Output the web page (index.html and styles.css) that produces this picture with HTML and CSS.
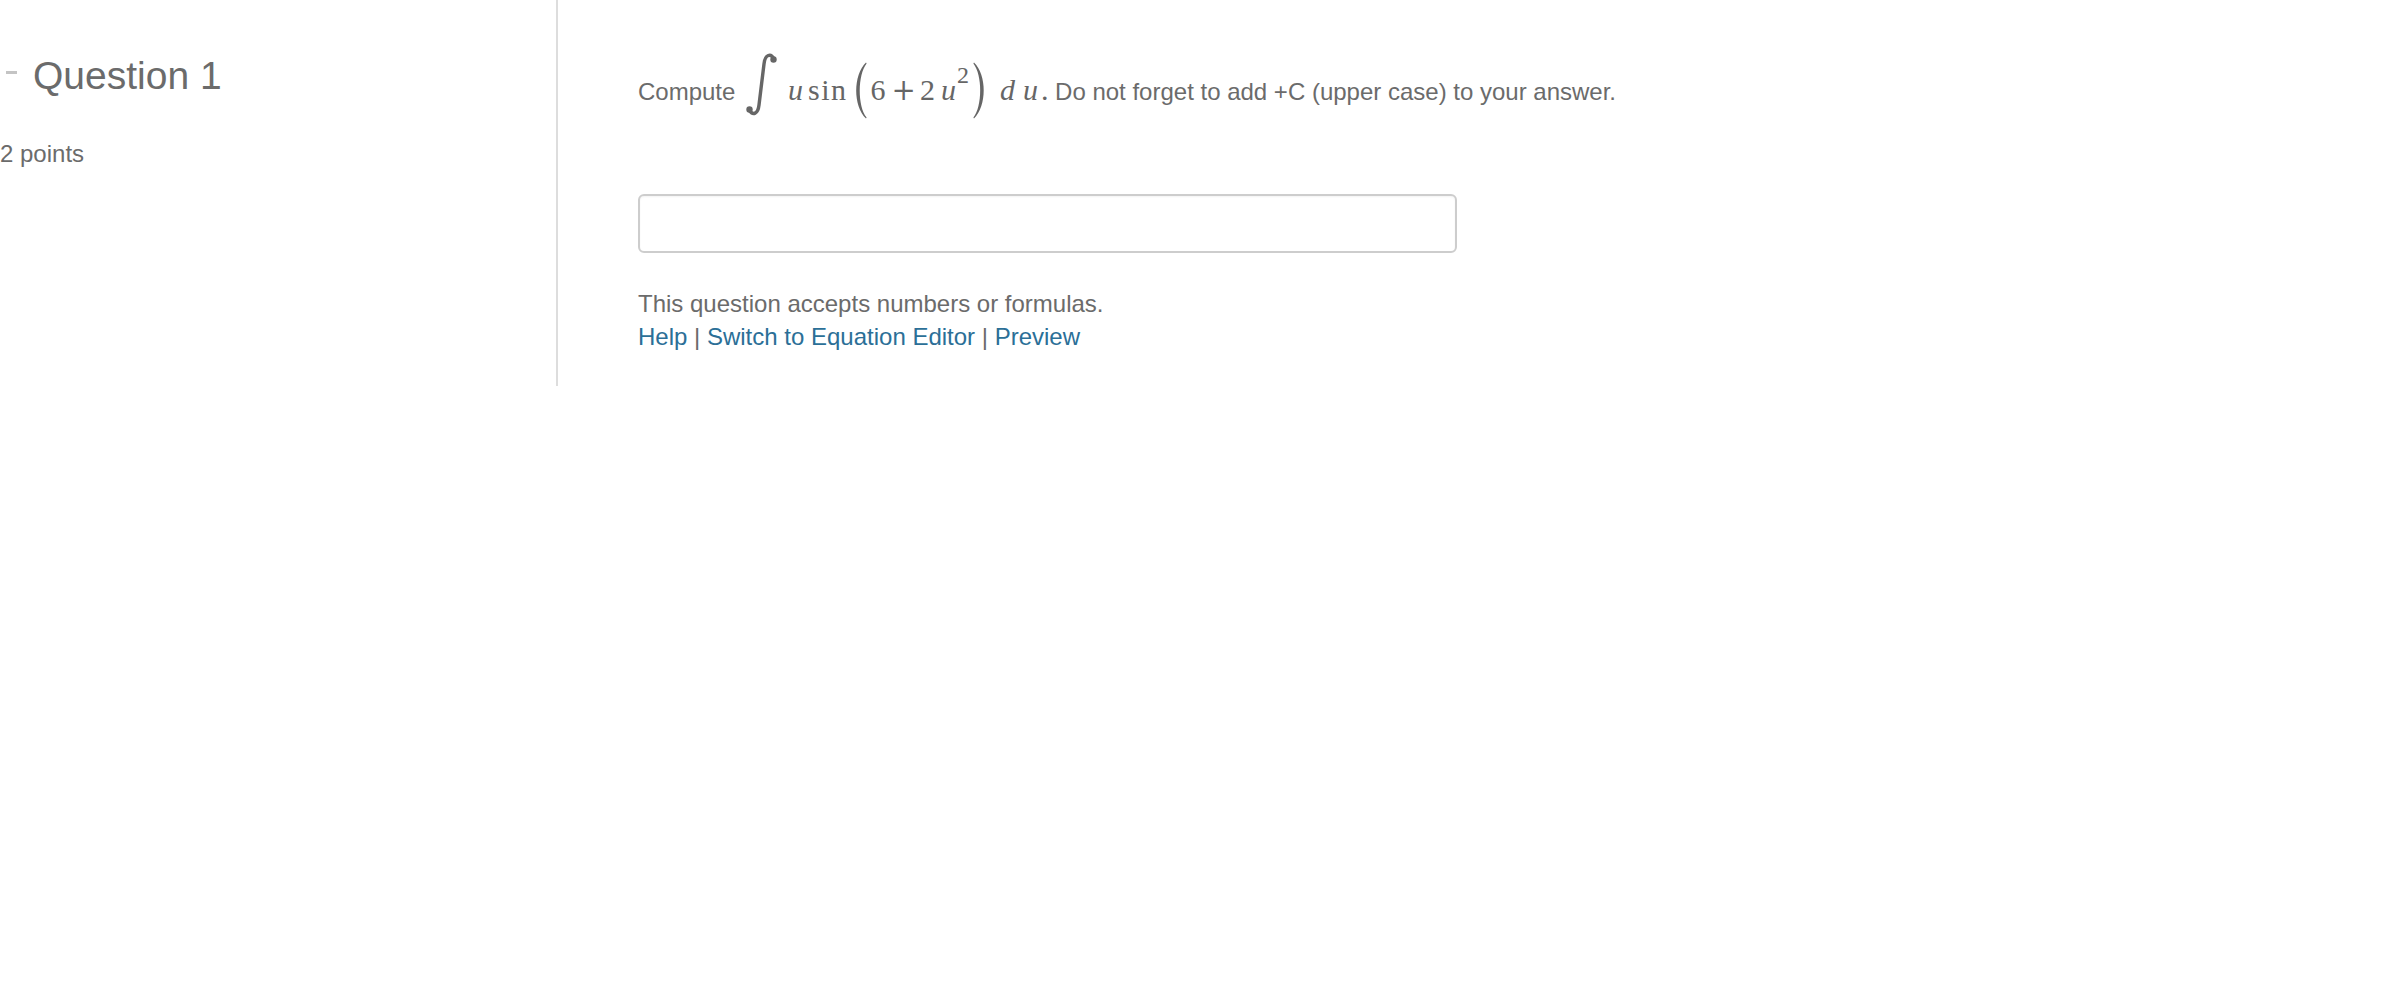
FILE: index.html
```html
<!DOCTYPE html>
<html lang='en'>
<head>
    <meta charset='UTF-8'>
    <title>Question 1</title>
    <link rel="stylesheet" href="styles.css">
</head>
<body>
    <div class='question'>
        <!-- Left header column -->
        <div class='question-side'>
            <h2 class='question-title'><span class='title-dash'></span>Question 1</h2>
            <div class='question-points'>2 points</div>
        </div>

        <!-- Question body -->
        <div class='question-body'>
            <p class='question-text'>Compute
                <svg class='math-int' width='33' height='65' viewBox='0 0 33 65'>
                    <path d='M29 7 C26 1, 20 2, 19 12 L14 53 C13 62, 8 64, 4 58' fill='none' stroke='#666' stroke-width='3.4' stroke-linecap='round'/>
                    <circle cx='28.5' cy='7.5' r='3.2' fill='#666'/>
                    <circle cx='4.5' cy='57.5' r='3.2' fill='#666'/>
                </svg><span class='math'><i class='mi sp-u'>u</i><span class='mo-sin'>sin</span><svg class='math-paren' width='15' height='57' viewBox='0 0 15 57'>
                    <path d='M14 0.5 C1 13, 1 44, 14 56.5 L14.6 55.6 C5.5 44, 5.5 13, 14.6 1.4 Z' fill='#666'/>
                </svg><span class='mn'>6</span><span class='mo-plus'>+</span><span class='mn'>2</span><i class='mi sp-var'>u</i><sup class='msup'>2</sup><svg class='math-paren rparen' width='15' height='57' viewBox='0 0 15 57'>
                    <path d='M1 0.5 C14 13, 14 44, 1 56.5 L0.4 55.6 C9.5 44, 9.5 13, 0.4 1.4 Z' fill='#666'/>
                </svg><i class='mi sp-d'>d</i><i class='mi sp-diff'>u</i><span class='mo-dot'>.</span></span> Do not forget to add +C (upper case) to your answer.</p>

            <input class='answer-input' type='text' aria-label='Answer'>

            <div class='answer-note'>This question accepts numbers or formulas.</div>
            <div class='answer-links'>
                <a href='#'>Help</a> | <a href='#'>Switch to Equation Editor</a> | <a href='#'>Preview</a>
            </div>
        </div>
    </div>
</body>
</html>
```

FILE: styles.css
```css
* {
    box-sizing: border-box;
    margin: 0;
    padding: 0;
}

body {
    background-color: #ffffff;
    font-family: 'Liberation Sans', Arial, sans-serif;
    font-size: 24px;
    line-height: 33px;
    color: #6b6b6b;
}

.question {
    display: flex;
}

/* Left column */
.question-side {
    width: 558px;
    padding-top: 52px;
    border-right: 2px solid #dddddd;
}

.question-title {
    display: flex;
    align-items: center;
    font-size: 39px;
    font-weight: normal;
    line-height: 48px;
    color: #6b6b6b;
}

.title-dash {
    width: 11px;
    height: 3px;
    margin: 0 16px 8px 6px;
    background-color: #c4c4c4;
}

.question-points {
    margin-top: 37px;
}

/* Right column */
.question-body {
    padding: 52px 0 33px 80px;
}

.question-text {
    white-space: nowrap;
}

.math-int {
    vertical-align: -17px;
    margin-left: 3px;
}

.math {
    font-family: 'Liberation Serif', 'Times New Roman', serif;
    font-size: 30px;
    color: #666666;
}

.mi {
    font-style: italic;
}

.sp-u {
    margin-left: 10px;
}

.mo-sin {
    margin-left: 5px;
    letter-spacing: 1.5px;
}

.math-paren {
    vertical-align: -19px;
    margin-left: 4px;
    margin-right: 4px;
}

.math-paren.rparen {
    margin-left: 4px;
    margin-right: 12px;
}

.mo-plus {
    font-family: 'DejaVu Serif', serif;
    font-size: 29px;
    margin: 0 4px 0 6px;
}

.sp-var {
    margin-left: 6px;
}

.sp-diff {
    margin-left: 8px;
}

.msup {
    font-size: 24px;
    vertical-align: 17px;
    line-height: 0;
    margin-left: 1px;
}

.mo-dot {
    margin-left: 3px;
}

.answer-input {
    display: block;
    width: 819px;
    height: 59px;
    margin-top: 75px;
    border: 2px solid #cdcdcd;
    border-radius: 6px;
    background-color: #ffffff;
    box-shadow: inset 0 1px 2px rgba(0, 0, 0, 0.05);
    font-size: 24px;
    padding: 0 12px;
}

.answer-note {
    margin-top: 34px;
}

.answer-links a {
    color: #2b6f97;
    text-decoration: none;
}
```
